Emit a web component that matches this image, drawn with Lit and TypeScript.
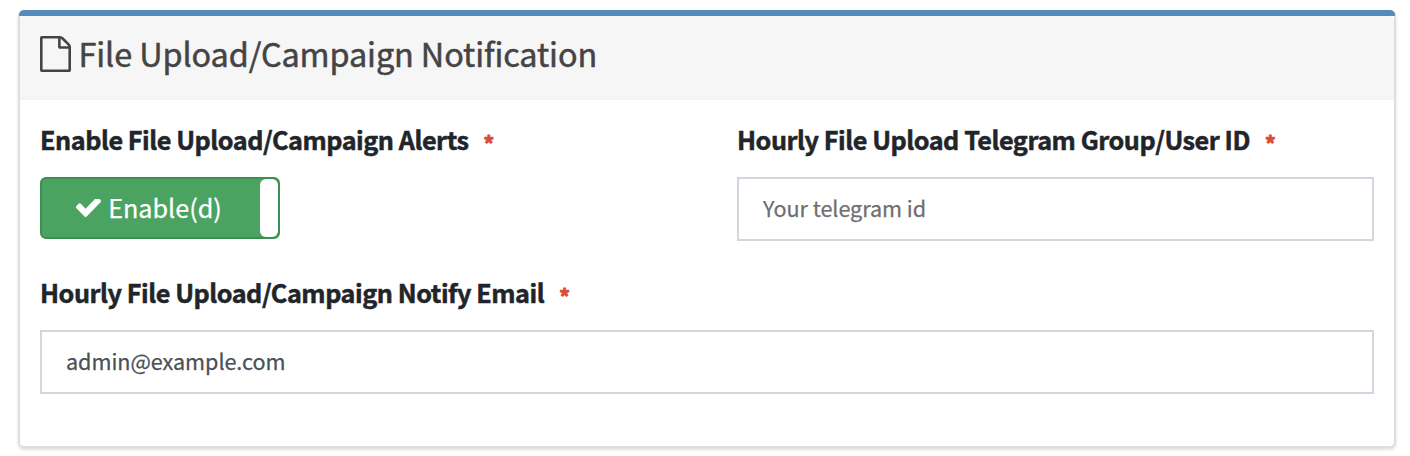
import { LitElement, html, css } from "lit";
import { customElement, property } from "lit/decorators.js";

@customElement("form-label")
class FormLabel extends LitElement {
  @property() text = "";
  static styles = css`
    :host { display: block; height: 40px; margin-bottom: 18px; line-height: 40px; white-space: nowrap; color: #212529; font-size: 25.2px; font-weight: 700; letter-spacing: -0.46px; -webkit-text-stroke: 0.5px currentColor; }
    .star { display: inline-block; line-height: 20px; vertical-align: -2px; color: #dd4b39; font-size: 21px; margin-left: 15px; -webkit-text-stroke: 1.1px currentColor; }
  `;
  render() {
    return html`<span>${this.text}</span><span class="star">*</span>`;
  }
}

@customElement("app-root")
class AppRoot extends LitElement {
  static styles = css`
    :host { display: block; box-sizing: border-box; height: 456px; padding: 10px 14px 8px 18px; overflow: hidden; background: #fff;
      font-family: "Noto Sans CJK SC", "Noto Sans CJK JP", "Noto Sans", sans-serif; }
    .card { box-sizing: border-box; height: 438px; border: 2px solid #dedede; border-top: 0; border-radius: 6px; background: #fff; box-shadow: 0 2px 3px rgba(0, 0, 0, 0.12); }
    .bar { height: 6px; margin: 0 -1px 0 -1px; background: #538cbb; border-radius: 5px 5px 0 0; }
    .head { box-sizing: border-box; height: 84px; padding: 0 20px 6px; display: flex; align-items: center; gap: 7.5px; background: #f6f6f6; border-bottom: 2px solid #f4f4f4; border-radius: 5px 5px 0 0; }
    .file { width: 31px; height: 36px; fill: #444; flex: none; }
    .title { margin: 0 0 2px; font-size: 32.4px; font-weight: 400; line-height: 50px; letter-spacing: -0.1px; color: #444; white-space: nowrap; -webkit-text-stroke: 0.5px currentColor; }
    .body { display: grid; grid-template-columns: 1fr 1fr; column-gap: 60px; row-gap: 31px; padding: 19px 20px 0; }
    .wide { grid-column: 1 / -1; }
    .toggle { box-sizing: border-box; width: 240px; height: 62px; border: 2px solid #3d8f51; border-radius: 6px; background: #4ba361; display: flex; overflow: hidden; color: #fff; }
    .on { flex: 1; display: flex; align-items: center; justify-content: center; gap: 7px; padding-right: 4px; font-size: 25.2px; line-height: 40px; -webkit-text-stroke: 0.25px currentColor; }
    .word { margin-bottom: 2px; }
    .check { width: 25px; height: 18px; fill: #fff; }
    .handle { width: 18px; background: #fff; border-radius: 6px; }
    .input { display: block; box-sizing: border-box; width: 100%; height: 64px; margin: 0; border: 2px solid #d2d6de; border-radius: 0; padding: 0 24px 4px; background: #fff; color: #495057; font-family: inherit; font-size: 21.6px; letter-spacing: -0.05px; outline: none; -webkit-text-stroke: 0.25px currentColor; }
    .input::placeholder { color: #6f6f6f; opacity: 1; }
  `;
  render() {
    return html`
      <section class="card">
        <div class="bar"></div>
        <header class="head">
          <svg class="file" viewBox="0 0 1536 1792" preserveAspectRatio="none"><path d="M1468 380q28 28 48 76t20 88v1152q0 40-28 68t-68 28H96q-40 0-68-28t-28-68V96q0-40 28-68T96 0h896q40 0 88 20t76 48zm-444-244v376h376q-10-29-22-41l-313-313q-12-12-41-22zm384 1528V640H992q-40 0-68-28t-28-68V128H128v1536h1280z"/></svg>
          <h1 class="title">File Upload/Campaign Notification</h1>
        </header>
        <div class="body">
          <div>
            <form-label text="Enable File Upload/Campaign Alerts"></form-label>
            <div class="toggle">
              <span class="on">
                <svg class="check" viewBox="121 434 1550 1088" preserveAspectRatio="none"><path d="M1671 566q0 40-28 68l-724 724-136 136q-28 28-68 28t-68-28l-136-136-362-362q-28-28-28-68t28-68l136-136q28-28 68-28t68 28l294 295 656-657q28-28 68-28t68 28l136 136q28 28 28 68z"/></svg>
                <span class="word">Enable(d)</span>
              </span>
              <span class="handle"></span>
            </div>
          </div>
          <div>
            <form-label text="Hourly File Upload Telegram Group/User ID"></form-label>
            <input class="input" placeholder="Your telegram id" />
          </div>
          <div class="wide">
            <form-label text="Hourly File Upload/Campaign Notify Email"></form-label>
            <input class="input" .value=${"admin@example.com"} />
          </div>
        </div>
      </section>
    `;
  }
}
